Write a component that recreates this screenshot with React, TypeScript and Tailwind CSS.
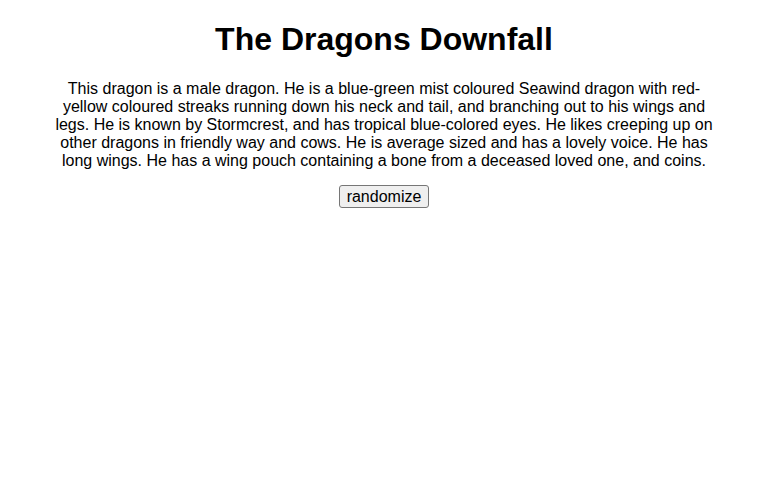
import React, { useState } from 'react';

const bios = [
  'This dragon is a male dragon. He is a blue-green mist coloured Seawind dragon with red-yellow coloured streaks running down his neck and tail, and branching out to his wings and legs. He is known by Stormcrest, and has tropical blue-colored eyes. He likes creeping up on other dragons in friendly way and cows. He is average sized and has a lovely voice. He has long wings. He has a wing pouch containing a bone from a deceased loved one, and coins.',
];

const App = () => {
  const [index, setIndex] = useState(0);

  return (
    <div className="min-h-screen bg-white text-black text-center px-[50px] font-['Liberation_Sans',Arial,sans-serif]">
      <h1 className="pt-[21px] mb-[22px] text-[32px] leading-[37px] font-bold">
        The Dragons Downfall
      </h1>
      <p className="text-base leading-[18px] mb-[15px]">{bios[index]}</p>
      <button
        onClick={() => setIndex((index + 1) % bios.length)}
        className="bg-[#efefef] border border-[#767676] rounded-[3px] px-[7px] pt-[2px] pb-[1px] text-base leading-[18px] text-black"
      >
        randomize
      </button>
    </div>
  );
};

export default App;
